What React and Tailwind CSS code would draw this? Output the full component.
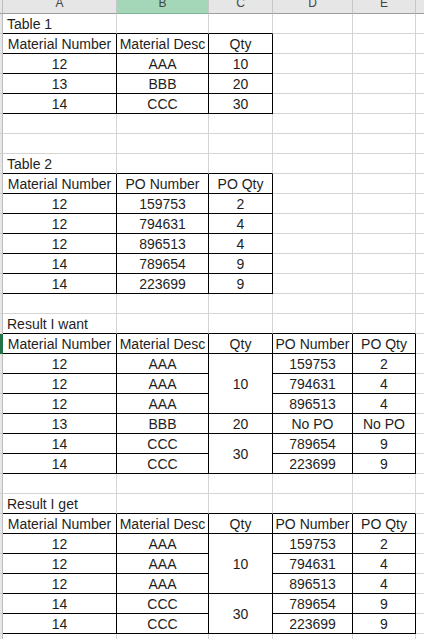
import React from "react";

const ROWS = 32;
const COLS = 5;

const tables = [
  { r1: 2, r2: 5, c1: 1, c2: 3 },
  { r1: 9, r2: 14, c1: 1, c2: 3 },
  { r1: 17, r2: 23, c1: 1, c2: 5 },
  { r1: 26, r2: 31, c1: 1, c2: 5 },
];

const inTable = (r, c) =>
  tables.some((t) => r >= t.r1 && r <= t.r2 && c >= t.c1 && c <= t.c2);

const data = {};
const set = (r, vals) => vals.forEach((v, i) => v !== null && (data[`${r}-${i + 1}`] = v));

// titles
const titles = { 1: "Table 1", 8: "Table 2", 16: "Result I want", 25: "Result I get" };

set(2, ["Material Number", "Material Desc", "Qty"]);
set(3, ["12", "AAA", "10"]);
set(4, ["13", "BBB", "20"]);
set(5, ["14", "CCC", "30"]);
set(9, ["Material Number", "PO Number", "PO Qty"]);
set(10, ["12", "159753", "2"]);
set(11, ["12", "794631", "4"]);
set(12, ["12", "896513", "4"]);
set(13, ["14", "789654", "9"]);
set(14, ["14", "223699", "9"]);

set(17, ["Material Number", "Material Desc", "Qty", "PO Number", "PO Qty"]);
set(18, ["12", "AAA", "10", "159753", "2"]);
set(19, ["12", "AAA", null, "794631", "4"]);
set(20, ["12", "AAA", null, "896513", "4"]);
set(21, ["13", "BBB", "20", "No PO", "No PO"]);
set(22, ["14", "CCC", "30", "789654", "9"]);
set(23, ["14", "CCC", null, "223699", "9"]);

set(26, ["Material Number", "Material Desc", "Qty", "PO Number", "PO Qty"]);
set(27, ["12", "AAA", "10", "159753", "2"]);
set(28, ["12", "AAA", null, "794631", "4"]);
set(29, ["12", "AAA", null, "896513", "4"]);
set(30, ["14", "CCC", "30", "789654", "9"]);
set(31, ["14", "CCC", null, "223699", "9"]);

// merged cells in column 3: start row -> span
const merges = { 18: 3, 22: 2, 27: 3, 30: 2 };
const covered = new Set(["19-3", "20-3", "23-3", "28-3", "29-3", "31-3"]);

const SELECTED_ROW = 17;

function HeaderRow() {
  const letters = ["A", "B", "C", "D", "E"];
  return (
    <>
      <div className="bg-[#e6e6e6] border-r border-b border-r-[#bdbdbd] border-b-[#9c9c9c]" />
      {letters.map((l) => (
        <div
          key={l}
          className={`flex justify-center overflow-hidden border-r border-b text-[12px] leading-[12px] text-[#444] ${
            l === "B"
              ? "bg-[#a3d7b8] border-r-[#c6c6c6] border-b-[#7fb495]"
              : "bg-[#e6e6e6] border-r-[#c6c6c6] border-b-[#9c9c9c]"
          }`}
        >
          <span className="-mt-[3px]">{l}</span>
        </div>
      ))}
      <div className="bg-[#e6e6e6] border-b border-b-[#9c9c9c]" />
    </>
  );
}

export default function App() {
  const cells = [];
  for (let r = 1; r <= ROWS; r++) {
    // strip
    cells.push(
      <div
        key={`s-${r}`}
        className={
          r === SELECTED_ROW
            ? "bg-[#217346] border-b border-b-[#217346]"
            : "bg-[#e6e6e6] border-r border-b border-r-[#bdbdbd] border-b-[#d4d4d4]"
        }
      />
    );
    for (let c = 1; c <= COLS; c++) {
      const key = `${r}-${c}`;
      if (covered.has(key)) continue;
      const span = c === 3 ? merges[r] || 1 : 1;
      const lastRow = r + span - 1;
      const bBlack = inTable(lastRow, c) || inTable(lastRow + 1, c);
      const rBlack = inTable(r, c) || inTable(r, c + 1);
      const isTitle = c === 1 && titles[r];
      const text = isTitle ? titles[r] : data[key];
      cells.push(
        <div
          key={key}
          className={`flex items-center whitespace-nowrap overflow-visible border-r border-b pt-px ${
            bBlack ? "border-b-black" : "border-b-[#d4d4d4]"
          } ${rBlack ? "border-r-black" : "border-r-[#d4d4d4]"} ${
            isTitle ? "justify-start pl-[4px]" : "justify-center"
          } ${span === 3 ? "row-span-3" : span === 2 ? "row-span-2" : ""}`}
        >
          {text ? <span className="leading-[19px]">{text}</span> : null}
        </div>
      );
    }
    cells.push(
      <div key={`f-${r}`} className="border-b border-b-[#d4d4d4]" />
    );
  }

  return (
    <div className="w-[424px] h-[639px] overflow-hidden bg-white font-['Liberation_Sans',Arial,sans-serif] text-[14px] text-[#1e1e1e]">
      <div className="grid grid-cols-[3px_114px_92px_64px_80px_63px_1fr] grid-rows-[14px_repeat(32,20px)]">
        <HeaderRow />
        {cells}
      </div>
    </div>
  );
}
